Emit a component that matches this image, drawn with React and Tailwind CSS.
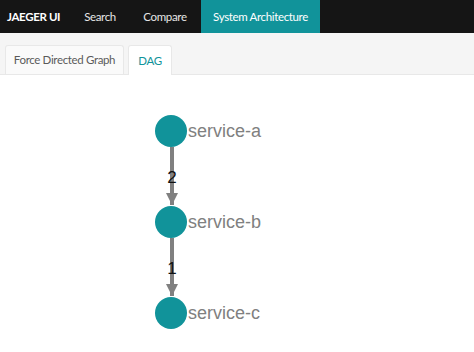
import React from 'react';

const TEAL = '#11939a';

const nodes = [
  { id: 'service-a', y: 56 },
  { id: 'service-b', y: 147 },
  { id: 'service-c', y: 238 },
];

const edges = [
  { from: 56, to: 147, label: '2' },
  { from: 147, to: 238, label: '1' },
];

const DagGraph = () => (
  <svg width="474" height="277" className="block tracking-normal">
    <defs>
      <marker id="arrow" viewBox="0 0 10 10" refX="10" refY="5" markerWidth="3" markerHeight="3" orient="auto">
        <path d="M0,0 L10,5 L0,10 z" fill="#808080" />
      </marker>
    </defs>
    {edges.map((e) => (
      <g key={e.label}>
        <line
          x1="172"
          y1={e.from + 16}
          x2="172"
          y2={e.to - 17}
          stroke="#808080"
          strokeWidth="4"
          markerEnd="url(#arrow)"
        />
        <text
          x="172"
          y={(e.from + e.to) / 2 + 6}
          textAnchor="middle"
          fontSize="17"
          fill="#111"
          style={{ fontFamily: '"Liberation Sans", Arial, sans-serif' }}
        >
          {e.label}
        </text>
      </g>
    ))}
    {nodes.map((n) => (
      <g key={n.id}>
        <circle cx="171" cy={n.y} r="16" fill={TEAL} />
        <text
          x="188"
          y={n.y + 6}
          fontSize="18"
          fill="#808080"
          style={{ fontFamily: '"Liberation Sans", Arial, sans-serif' }}
        >
          {n.id}
        </text>
      </g>
    ))}
  </svg>
);

const App = () => {
  return (
    <div className="w-[474px] h-[352px] overflow-hidden bg-white text-[11.5px] whitespace-nowrap" style={{ fontFamily: 'Lato, "Noto Sans", sans-serif' }}>
      {/* Top navigation */}
      <div className="flex h-[33px] items-stretch bg-[#151515] tracking-[-0.35px] text-white">
        <div className="flex w-[71px] items-center pl-[7px] font-bold">JAEGER UI</div>
        <div className="flex w-[58px] items-center justify-center text-[#e6e6e6]">Search</div>
        <div className="flex w-[72px] items-center justify-center text-[#e6e6e6]">Compare</div>
        <div className="flex w-[119px] items-center justify-center bg-[#11939a]">System Architecture</div>
      </div>

      {/* Tabs */}
      <div className="flex h-[42px] items-end gap-[4px] border-b border-[#e8e8e8] bg-[#f5f5f5] pl-[5px] tracking-[-0.35px]">
        <div className="flex h-[29px] w-[119px] items-center justify-center rounded-t-[3px] border border-b-0 border-[#e8e8e8] bg-[#fafafa] text-[#5a5a5a]">
          Force Directed Graph
        </div>
        <div className="-mb-px flex h-[30px] w-[44px] items-center justify-center rounded-t-[3px] border border-b-0 border-[#e8e8e8] bg-white text-[#11939a]">
          DAG
        </div>
      </div>

      <DagGraph />
    </div>
  );
};

export default App;
